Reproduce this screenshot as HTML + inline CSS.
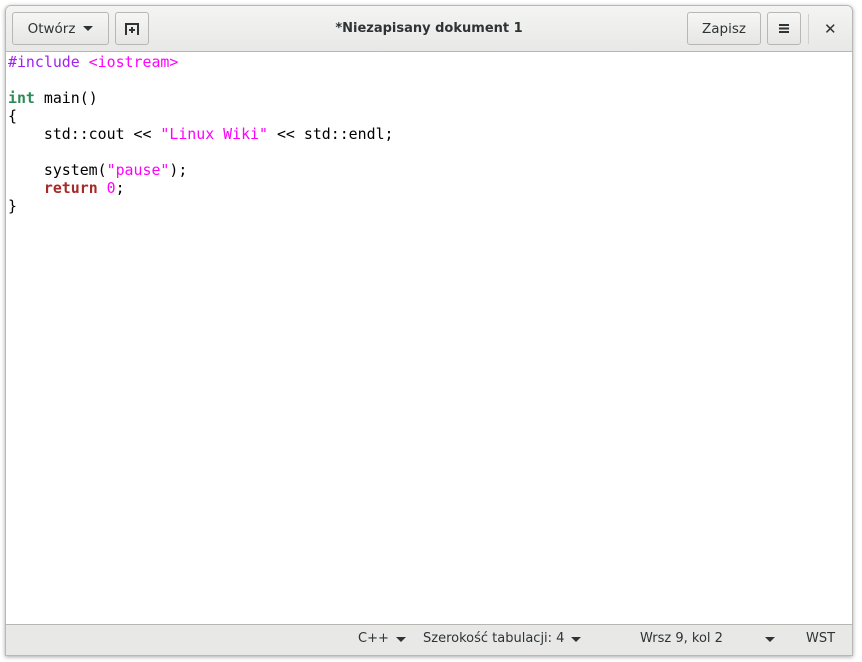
<!DOCTYPE html>
<html><head><meta charset="utf-8"><style>
*{margin:0;padding:0;box-sizing:border-box}
body{width:862px;height:662px;background:#fff;position:relative;overflow:hidden;font-family:"Liberation Sans","DejaVu Sans",sans-serif}
.win{position:absolute;left:5px;top:5px;width:848px;height:651px;background:#fff;border:1px solid #b8b8b6;border-radius:6px 6px 0 0;box-shadow:0 1px 4px rgba(0,0,0,.35);overflow:hidden}
.hdr{position:absolute;left:0;top:0;width:100%;height:46px;background:linear-gradient(#f4f4f3,#e8e8e7);border-bottom:1px solid #b6b6b3}
.btn{position:absolute;top:6px;height:33px;border:1px solid #b7b7b5;border-radius:3px;background:linear-gradient(#f6f6f5,#e6e6e5);font-size:13.5px;color:#2e3436;display:flex;align-items:center;justify-content:center;font-family:"DejaVu Sans",sans-serif}
.title{position:absolute;left:0;right:0;top:15px;text-align:center;font-weight:bold;font-size:13px;color:#2e3436;font-family:"DejaVu Sans",sans-serif}
.tri{display:inline-block;width:0;height:0;border-left:5px solid transparent;border-right:5px solid transparent;border-top:5px solid #2e3436;margin-left:8px}
pre{position:absolute;left:2px;top:47px;font-family:"DejaVu Sans Mono",monospace;font-size:14.9px;line-height:18px;color:#000}
.pp{color:#a020f0}.s{color:#ff00ff}.t{color:#2e8b57;font-weight:bold}.k{color:#a52a2a;font-weight:bold}
.sb{position:absolute;left:0;bottom:0;width:100%;height:31px;background:#e8e8e7;border-top:1px solid #b6b6b3;font-size:13px;color:#2e3436;font-family:"DejaVu Sans",sans-serif}
.sb span{position:absolute;top:6px}
.sb .tri{margin-left:7px;vertical-align:2px}
</style></head><body>
<div class="win">
<div class="hdr">
<div class="btn" style="left:6px;width:97px">Otwórz<span class="tri"></span></div>
<div class="btn" style="left:109px;width:34px"><svg width="16" height="14" viewBox="0 0 16 14"><path d="M2 13V2h12v11" fill="none" stroke="#2e3436" stroke-width="2"/><path d="M8 5v6M5 8h6" stroke="#2e3436" stroke-width="2"/></svg></div>
<div class="title">*Niezapisany dokument 1</div>
<div class="btn" style="left:681px;width:74px">Zapisz</div>
<div class="btn" style="left:761px;width:34px"><svg width="12" height="11"><path d="M1 2h10M1 5.5h10M1 9h10" stroke="#2e3436" stroke-width="2"/></svg></div>
<div style="position:absolute;left:802px;top:8px;width:1px;height:30px;background:#cfcfcd"></div>
<div style="position:absolute;left:818px;top:14px;font-size:15px;font-weight:bold;color:#2e3436">✕</div>
</div>
<pre><span class="pp">#include </span><span class="s">&lt;iostream&gt;</span>

<span class="t">int</span> main()
{
    std::cout &lt;&lt; <span class="s">"Linux Wiki"</span> &lt;&lt; std::endl;

    system(<span class="s">"pause"</span>);
    <span class="k">return</span> <span class="s">0</span>;
}</pre>
<div class="sb">
<span style="left:352px">C++<span class="tri"></span></span>
<span style="left:417px">Szerokość tabulacji: 4<span class="tri"></span></span>
<span style="left:634px">Wrsz 9, kol 2</span>
<span style="left:752px"><span class="tri"></span></span>
<span style="left:800px">WST</span>
</div>
</div>
</body></html>
